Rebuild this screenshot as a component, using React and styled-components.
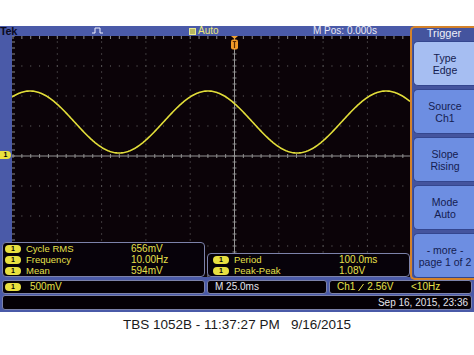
import React from 'react'
import styled, { createGlobalStyle } from 'styled-components'

const GlobalStyle = createGlobalStyle`
  body {
    margin: 0;
    background: #fff;
    font-family: "Liberation Sans", Arial, sans-serif;
  }
`

const Page = styled.div`
  width: 474px;
  height: 355px;
  display: flex;
  flex-direction: column;
  background: #fff;
  overflow: hidden;
`

const Scope = styled.div`
  margin-top: 26px;
  height: 286px;
  background: #4a5aa8;
  display: flex;
  flex-direction: column;
`

const Main = styled.div`
  display: flex;
  height: 254px;
`

const LeftArea = styled.div`
  width: 410px;
  display: flex;
  flex-direction: column;
`

const TopBar = styled.div`
  height: 10px;
  display: grid;
  grid-template-columns: 92px 97px 124px 1fr;
  align-items: center;
  font-size: 10px;
  line-height: 10px;
  color: #e8e8f4;
`

const Tek = styled.span`
  font-weight: bold;
  font-size: 11px;
  color: #0a0a20;
  letter-spacing: -0.4px;
`

const AutoTag = styled.span`
  display: flex;
  align-items: center;
  gap: 2px;
  color: #ece878;
`

const Body = styled.div`
  position: relative;
  height: 241px;
  display: flex;
`

const LeftStrip = styled.div`
  position: relative;
  width: 12px;
  background: #4a5aa8;
`

const ChanMarker = styled.span`
  position: absolute;
  left: 0;
  top: 115px;
  width: 11px;
  height: 8px;
  border-radius: 0 4px 4px 0;
  background: #e8e040;
  color: #000;
  font-size: 7px;
  line-height: 8px;
  font-weight: bold;
  text-align: center;
`

const Graticule = styled.div`
  flex: 1;
  background: #0b0308;
  overflow: hidden;
`

const Panel = styled.div`
  position: absolute;
  left: ${p => p.$left}px;
  bottom: 0;
  width: 203px;
  height: ${p => p.$height}px;
  box-sizing: border-box;
  border: 1px solid #7c82aa;
  border-radius: 4px;
  background: #07020a;
  padding-left: ${p => p.$pad}px;
  display: flex;
  flex-direction: column;
`

const MeasRow = styled.div`
  height: 11px;
  display: grid;
  grid-template-columns: 16px 100px auto;
  column-gap: 5px;
  align-items: center;
  font-size: 9.5px;
  line-height: 11px;
  color: #e6e04a;
`

const Badge = styled.span`
  width: 16px;
  height: 8px;
  border-radius: 4px;
  background: #e8e040;
  color: #000;
  font-size: 7px;
  line-height: 8px;
  font-weight: bold;
  text-align: center;
`

const Value = styled.span`
  font-size: 10px;
`

const Menu = styled.div`
  width: 64px;
  box-sizing: border-box;
  border: 2px solid #d4822a;
  border-right: none;
  border-radius: 5px 0 0 5px;
  display: flex;
  flex-direction: column;
  gap: 3px;
  background: #44549e;
`

const MenuTitle = styled.div`
  height: 10px;
  line-height: 10px;
  font-size: 11px;
  color: #eef0fa;
  text-align: center;
  padding-left: 2px;
`

const MenuButton = styled.div`
  flex: 1;
  margin-left: 1px;
  border: 1px solid #34468f;
  border-right: none;
  border-radius: 5px 0 0 5px;
  background: ${p => (p.$active ? '#a6bef2' : '#6d8ee2')};
  display: flex;
  flex-direction: column;
  align-items: center;
  justify-content: center;
  font-size: 10.5px;
  line-height: 12px;
  color: #141c50;
  padding-left: 2px;
`

const StatusRow = styled.div`
  height: 14px;
  display: flex;
  gap: 2px;
  padding: 0 2px;
`

const StatusBox = styled.div`
  box-sizing: border-box;
  width: ${p => (p.$width ? `${p.$width}px` : 'auto')};
  flex: ${p => (p.$width ? 'none' : '1')};
  border: 1px solid #7c82aa;
  border-radius: 3px;
  background: #050005;
  display: flex;
  align-items: center;
  padding-left: ${p => p.$pad}px;
  font-size: 10px;
  line-height: 12px;
  color: ${p => p.$color || '#e6e04a'};
`

const BoxText = styled.span`
  margin-left: ${p => p.$gap || 0}px;
`

const TrigInfo = styled.span`
  width: 74px;
  display: flex;
  align-items: center;
  gap: 3px;
`

const DateRow = styled.div`
  height: 15px;
  margin: 1px 2px 0;
  box-sizing: border-box;
  border: 1px solid #7c82aa;
  border-radius: 3px;
  background: #050005;
  display: flex;
  align-items: center;
  justify-content: flex-end;
  padding-right: 3px;
  font-size: 10px;
  color: #e4e4ec;
`

const Caption = styled.div`
  margin-top: 6px;
  line-height: 14px;
  font-size: 13.5px;
  color: #1a1a1a;
  text-align: center;
  white-space: pre;
`

const W = 398
const H = 241
const DX = 44.3
const DY = 30

function GridSvg() {
  const dots = []
  const ticks = []
  // dotted grid lines, one dot per minor division
  for (let k = 1; k <= 8; k++) {
    if (k === 5) continue
    const x = 1 + k * DX
    for (let j = 0; j <= 40; j++) dots.push([x, j * 6])
  }
  for (let j = 1; j <= 7; j++) {
    if (j === 4) continue
    for (let i = 0; i < 46; i++) dots.push([1 + (i * DX) / 5, j * DY])
  }
  const cx = 1 + 5 * DX
  const cy = 4 * DY
  for (let i = 0; i < 46; i++) {
    const x = 1 + (i * DX) / 5
    ticks.push(`M${x} ${cy - 2}V${cy + 2}`)
    ticks.push(`M${x} 0V3`)
    ticks.push(`M${x} ${H - 3}V${H}`)
  }
  for (let j = 0; j <= 40; j++) {
    const y = j * 6
    ticks.push(`M${cx - 2} ${y}H${cx + 2}`)
    ticks.push(`M0 ${y}H3`)
  }
  let trace = ''
  for (let x = 0; x <= W; x += 1) {
    const gx = x + 12
    const gy = 122 - 31 * Math.cos((2 * Math.PI * (gx - 30)) / 178)
    trace += `${x === 0 ? 'M' : 'L'}${x} ${(gy - 36).toFixed(2)}`
  }
  return (
    <svg width={W} height={H} viewBox={`0 0 ${W} ${H}`} style={{ display: 'block' }}>
      {dots.map(([x, y], i) => (
        <rect key={i} x={x - 0.5} y={y - 0.5} width="1" height="1" fill="#6e6e6e" />
      ))}
      <path d={ticks.join('')} stroke="#8a8a8a" strokeWidth="1" fill="none" />
      <path d={`M0 ${cy}H${W}M${cx} 0V${H}`} stroke="#949494" strokeWidth="1" fill="none" />
      <path d={trace} stroke="#e2de3a" strokeWidth="1.6" fill="none" />
      <g transform={`translate(${cx - 3.5} 0)`}>
        <path d="M0 0H7L3.5 3Z" fill="#f0a030" />
        <rect x="0" y="3.5" width="7" height="10" rx="2" fill="#f09a28" />
        <path d="M1.8 5.5H5.2M3.5 5.5V12" stroke="#5a2a00" strokeWidth="1.2" />
      </g>
    </svg>
  )
}

const Pulse = () => (
  <svg width="11" height="7" viewBox="0 0 11 7">
    <path d="M0 6H3V1H8V6H11" stroke="#f0f0ff" strokeWidth="1" fill="none" />
  </svg>
)

const AutoIcon = () => (
  <svg width="7" height="7" viewBox="0 0 7 7">
    <rect x="0.5" y="0.5" width="6" height="6" fill="#b8b860" stroke="#e8e890" />
  </svg>
)

const RiseIcon = () => (
  <svg width="6" height="9" viewBox="0 0 6 9">
    <path d="M0.5 8L5.5 1" stroke="#e6e04a" strokeWidth="1" fill="none" />
  </svg>
)

const leftMeas = [
  ['Cycle RMS', '656mV'],
  ['Frequency', '10.00Hz'],
  ['Mean', '594mV'],
]

const rightMeas = [
  ['Period', '100.0ms'],
  ['Peak-Peak', '1.08V'],
]

const menuItems = [
  ['Type', 'Edge'],
  ['Source', 'Ch1'],
  ['Slope', 'Rising'],
  ['Mode', 'Auto'],
  ['- more -', 'page 1 of 2'],
]

export default function App() {
  return (
    <Page>
      <GlobalStyle />
      <Scope>
        <Main>
          <LeftArea>
            <TopBar>
              <Tek>Tek</Tek>
              <span><Pulse /></span>
              <AutoTag>
                <AutoIcon />
                Auto
              </AutoTag>
              <span>M Pos: 0.000s</span>
            </TopBar>
            <Body>
              <LeftStrip>
                <ChanMarker>1</ChanMarker>
              </LeftStrip>
              <Graticule>
                <GridSvg />
              </Graticule>
              <Panel $left={2} $height={35} $pad={2}>
                {leftMeas.map(([label, val]) => (
                  <MeasRow key={label}>
                    <Badge>1</Badge>
                    <span>{label}</span>
                    <Value>{val}</Value>
                  </MeasRow>
                ))}
              </Panel>
              <Panel $left={207} $height={24} $pad={5}>
                {rightMeas.map(([label, val]) => (
                  <MeasRow key={label}>
                    <Badge>1</Badge>
                    <span>{label}</span>
                    <Value>{val}</Value>
                  </MeasRow>
                ))}
              </Panel>
            </Body>
          </LeftArea>
          <Menu>
            <MenuTitle>Trigger</MenuTitle>
            {menuItems.map(([a, b], i) => (
              <MenuButton key={a} $active={i === 0}>
                <span>{a}</span>
                <span>{b}</span>
              </MenuButton>
            ))}
          </Menu>
        </Main>
        <StatusRow>
          <StatusBox $width={203} $pad={2}>
            <Badge>1</Badge>
            <BoxText $gap={9}>500mV</BoxText>
          </StatusBox>
          <StatusBox $width={120} $pad={7} $color="#e4e4ec">
            M 25.0ms
          </StatusBox>
          <StatusBox $pad={7}>
            <TrigInfo>
              Ch1 <RiseIcon /> 2.56V
            </TrigInfo>
            <span>&lt;10Hz</span>
          </StatusBox>
        </StatusRow>
        <DateRow>Sep 16, 2015, 23:36</DateRow>
      </Scope>
      <Caption>{'TBS 1052B - 11:37:27 PM   9/16/2015'}</Caption>
    </Page>
  )
}
